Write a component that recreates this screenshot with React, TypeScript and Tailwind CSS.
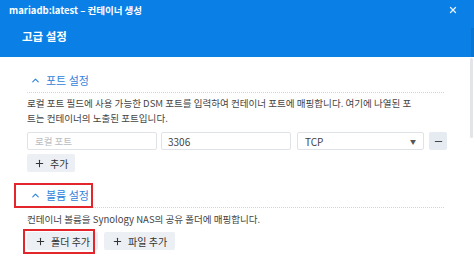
import { ChevronUp, Plus, Minus, X } from "lucide-react";

const FONT = "font-['Noto_Sans_CJK_KR','Noto_Sans',sans-serif]";

function SectionTitle({ label, boxed }: { label: string; boxed?: boolean }) {
	return (
		<div className="relative">
			<div className="flex h-[24px] items-center gap-[5px] pl-[3px] text-[11px] text-[#2f83dc]">
				<ChevronUp size={11} strokeWidth={2.5} />
				<span>{label}</span>
			</div>
			<div className="mr-[24px] border-b border-dotted border-[#cfd5dc]" />
			{boxed ? (
				<div className="absolute left-[-13px] top-0 h-[25px] w-[79px] border-2 border-[#e3262b]" />
			) : null}
		</div>
	);
}

function GrayButton({ label, boxed }: { label: string; boxed?: boolean }) {
	return (
		<div className="relative">
			<button
				type="button"
				className="flex h-[18px] items-center gap-[5px] whitespace-nowrap rounded-[2px] bg-[#eceff4] px-[8px] text-[10px] text-[#333]"
			>
				<Plus size={11} strokeWidth={2.25} />
				{label}
			</button>
			{boxed ? (
				<div className="absolute left-[-4px] top-[-3px] h-[25px] w-[72px] border-2 border-[#e3262b]" />
			) : null}
		</div>
	);
}

export default function App() {
	return (
		<div className={`h-[261px] w-[474px] overflow-hidden bg-white ${FONT}`}>
			<header className="relative h-[57px] bg-[#0a7fe6] px-[9px] pt-[3px] text-white">
				<div className="flex items-center justify-between">
					<span className="text-[9.5px] font-bold">mariadb:latest – 컨테이너 생성</span>
					<X size={10} strokeWidth={3} className="mr-[7px] opacity-90" />
				</div>
				<p className="ml-[13px] mt-[11px] text-[11.5px] font-bold">고급 설정</p>
				<div className="absolute right-0 top-[28px] h-[29px] w-[3px] bg-[#0a74d2]" />
			</header>

			<div className="flex">
				<main className="flex-1 pl-[27px] pr-[2px] pt-[11px]">
					<SectionTitle label="포트 설정" />
					<p className="mt-[3px] whitespace-nowrap text-[9.55px] leading-[15px] text-[#444]">
						로컬 포트 필드에 사용 가능한 DSM 포트를 입력하여 컨테이너 포트에 매핑합니다. 여기에 나열된 포
						<br />
						트는 컨테이너의 노출된 포트입니다.
					</p>

					<div className="mt-[6px] flex items-center gap-[4px]">
						<div className="flex h-[18px] w-[130px] items-center rounded-[2px] border border-[#dfe3e8] px-[7px] text-[9.5px] text-[#b8bcc2]">
							로컬 포트
						</div>
						<div className="flex h-[18px] w-[130px] items-center rounded-[2px] border border-[#dfe3e8] px-[6px] text-[10px] text-[#444]">
							3306
						</div>
						<div className="ml-[2px] flex h-[18px] w-[127px] items-center justify-between rounded-[2px] border border-[#dfe3e8] pl-[7px] pr-[7px] text-[10px] text-[#444]">
							TCP
							<span className="text-[6px] text-[#555]">▼</span>
						</div>
						<button
							type="button"
							className="ml-[1px] flex h-[18px] w-[18px] items-center justify-center rounded-[2px] bg-[#e6eaf1] text-[#444]"
						>
							<Minus size={11} strokeWidth={2.5} />
						</button>
					</div>

					<div className="mt-[4px] flex">
						<button
							type="button"
							className="flex h-[18px] items-center gap-[5px] whitespace-nowrap rounded-[2px] bg-[#eceff4] px-[7px] text-[10px] text-[#333]"
						>
							<Plus size={11} strokeWidth={2.25} />
							추가
						</button>
					</div>

					<div className="mt-[11px]">
						<SectionTitle label="볼륨 설정" boxed />
					</div>
					<p className="mt-[4px] text-[9.55px] leading-[15px] text-[#444]">
						컨테이너 볼륨을 Synology NAS의 공유 폴더에 매핑합니다.
					</p>
					<div className="mt-[5px] flex gap-[6px]">
						<GrayButton label="폴더 추가" boxed />
						<GrayButton label="파일 추가" />
					</div>
				</main>
				<div className="w-[4px] pt-[1px]">
					<div className="h-[80px] w-[3px] rounded-[2px] bg-[#e3e5e8]" />
				</div>
			</div>
		</div>
	);
}
